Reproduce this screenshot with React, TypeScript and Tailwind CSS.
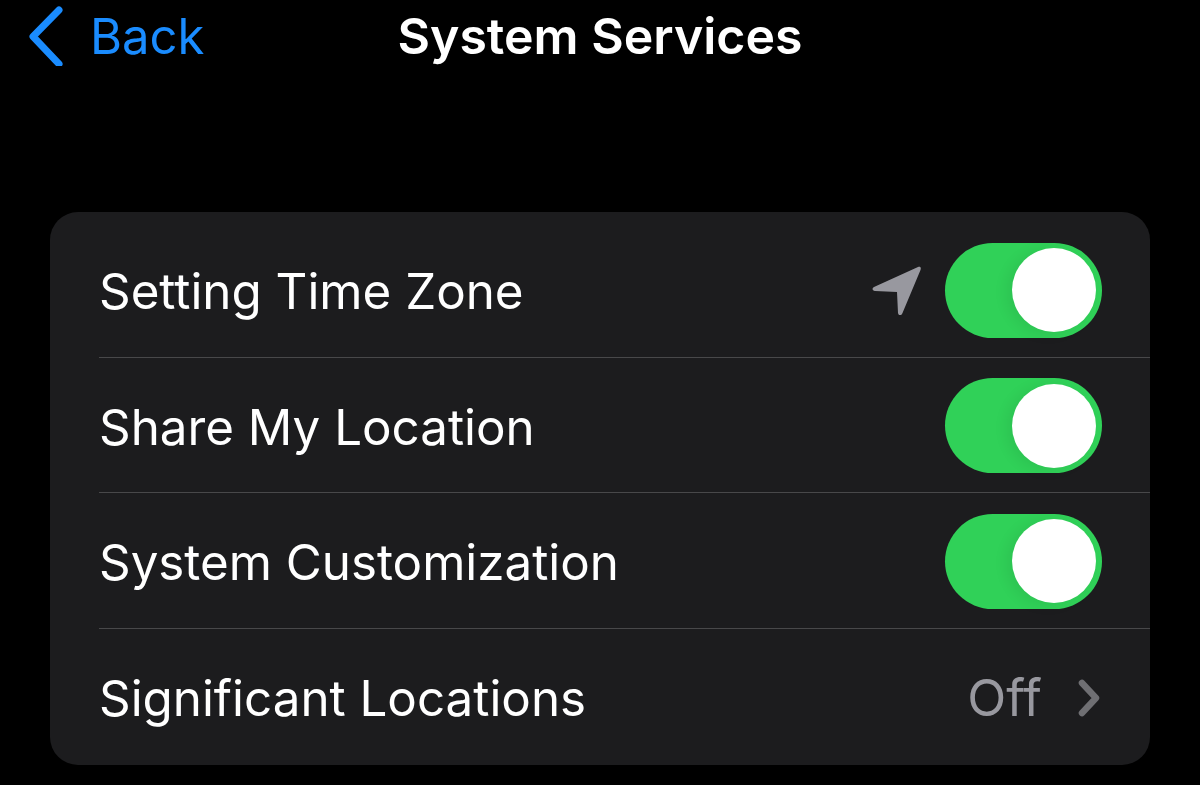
import React from "react";

const rowText = "pt-[3px] text-[49.3px] leading-none text-white";

function Toggle() {
  return (
    <div className="flex h-[95px] w-[157px] items-center justify-end rounded-full bg-[#30d158] pr-[6px]">
      <div className="h-[84px] w-[84px] rounded-full bg-white shadow-[-6px_2px_14px_rgba(0,0,0,0.07)]" />
    </div>
  );
}

function Row({ label, children, last }: { label: string; children?: React.ReactNode; last?: boolean }) {
  return (
    <div className="pl-[49px]">
      <div
        className={`flex items-center justify-between pr-[48px] pt-[2px] ${
          last ? "h-[136px]" : "h-[135.5px] border-b border-[#48484a]"
        }`}
      >
        <span className={rowText}>{label}</span>
        <div className="flex items-center">{children}</div>
      </div>
    </div>
  );
}

export default function App() {
  return (
    <div className="h-[785px] w-[1200px] overflow-hidden bg-black font-['Inter',sans-serif]">
      <header className="relative flex h-[72px] items-center justify-center">
        <div className="absolute left-[28px] top-[6px] flex items-center">
          <svg width="36" height="60" viewBox="0 0 36 60" fill="none">
            <path d="M31 4 L5 30.5 L31 58" stroke="#1a8cff" strokeWidth="7" strokeLinecap="round" strokeLinejoin="round" />
          </svg>
          <span className="ml-[26px] text-[49px] leading-none text-[#1a8cff]">Back</span>
        </div>
        <h1 className="text-[50px] font-semibold leading-none text-white">System Services</h1>
      </header>

      <div className="mx-[50px] mt-[140px] h-[553px] rounded-[28px] bg-[#1c1c1e] pt-[10px]">
        <Row label="Setting Time Zone">
          <svg width="50" height="50" viewBox="0 0 50 50" className="mr-[24px]">
            <path
              d="M47 2 L3 22 C0.5 23.5 1.5 26 4 26 L26 27 L27 48 C27.5 51 30.5 51 31.5 48 L49.5 5 C50.5 2 49 1 47 2 Z"
              fill="#98989f"
            />
          </svg>
          <Toggle />
        </Row>
        <Row label="Share My Location">
          <Toggle />
        </Row>
        <Row label="System Customization">
          <Toggle />
        </Row>
        <Row label="Significant Locations" last>
          <span className="text-[51px] leading-none text-[#98989f]">Off</span>
          <svg width="26" height="40" viewBox="0 0 26 40" fill="none" className="ml-[33px] mr-[1px]">
            <path d="M7 5 L21 20 L7 35" stroke="#6f6f73" strokeWidth="6.5" strokeLinecap="round" strokeLinejoin="round" />
          </svg>
        </Row>
      </div>
    </div>
  );
}
